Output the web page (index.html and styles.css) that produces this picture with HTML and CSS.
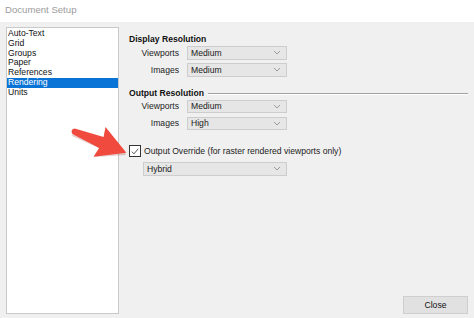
FILE: index.html
```html
<!DOCTYPE html>
<html>
<head>
<meta charset="utf-8">
<link rel="stylesheet" href="styles.css">
</head>
<body>
<div class="window">
  <div class="titlebar">Document Setup</div>
  <div class="content">
    <ul class="list">
      <li>Auto-Text</li>
      <li>Grid</li>
      <li>Groups</li>
      <li>Paper</li>
      <li>References</li>
      <li class="selected">Rendering</li>
      <li>Units</li>
    </ul>
    <div class="panel">
      <div class="heading">Display Resolution</div>
      <div class="rows">
        <span class="label">Viewports</span>
        <div class="select"><span>Medium</span><svg class="chev" viewBox="0 0 8 5" width="8" height="5"><path d="M1 1 L4 4 L7 1" fill="none" stroke="#9a9a9a" stroke-width="1"/></svg></div>
        <span class="label">Images</span>
        <div class="select"><span>Medium</span><svg class="chev" viewBox="0 0 8 5" width="8" height="5"><path d="M1 1 L4 4 L7 1" fill="none" stroke="#9a9a9a" stroke-width="1"/></svg></div>
      </div>
      <div class="heading ruled"><span>Output Resolution</span><i class="rule"></i></div>
      <div class="rows">
        <span class="label">Viewports</span>
        <div class="select"><span>Medium</span><svg class="chev" viewBox="0 0 8 5" width="8" height="5"><path d="M1 1 L4 4 L7 1" fill="none" stroke="#9a9a9a" stroke-width="1"/></svg></div>
        <span class="label">Images</span>
        <div class="select"><span>High</span><svg class="chev" viewBox="0 0 8 5" width="8" height="5"><path d="M1 1 L4 4 L7 1" fill="none" stroke="#9a9a9a" stroke-width="1"/></svg></div>
      </div>
      <label class="check">
        <span class="box"><svg viewBox="0 0 12 12" width="11" height="11"><path d="M2.2 6.2 L4.8 8.8 L9.8 2.8" fill="none" stroke="#333" stroke-width="1"/></svg></span>
        <span>Output Override (for raster rendered viewports only)</span>
      </label>
      <div class="select wide"><span>Hybrid</span><svg class="chev" viewBox="0 0 8 5" width="8" height="5"><path d="M1 1 L4 4 L7 1" fill="none" stroke="#9a9a9a" stroke-width="1"/></svg></div>
      <div class="spacer"></div>
      <div class="footer"><button class="btn">Close</button></div>
    </div>
  </div>
  <svg class="arrow" width="80" height="50" viewBox="0 0 80 50">
    <g transform="translate(13,12) rotate(22)">
      <path d="M1 2 L31 -1 L29 -13 L58 1 L29 15 L31 5 L1 4 Q-2 3 1 2 Z" fill="#9b3b33" opacity="0.25" transform="translate(1,2)"/>
      <path d="M1 -2 L31 -5 L29 -15 L58 1 L29 17 L31 7 L1 4 Q-3 1 1 -2 Z" fill="#ef4a3d"/>
    </g>
  </svg>
</div>
</body>
</html>
```

FILE: styles.css
```css
* { box-sizing: border-box; }
html, body { margin: 0; padding: 0; }
body {
  width: 474px;
  height: 318px;
  overflow: hidden;
  background: #f0f0f0;
  font-family: "Liberation Sans", Arial, sans-serif;
  font-size: 8.6px;
  color: #1a1a1a;
}
.window {
  position: relative;
  width: 474px;
  height: 318px;
  display: flex;
  flex-direction: column;
}
.titlebar {
  height: 22px;
  background: #ffffff;
  color: #9b9b9b;
  font-size: 9.6px;
  line-height: 20px;
  padding-left: 5px;
  flex: none;
}
.content {
  flex: 1;
  display: flex;
  padding: 5px 6px 4px 6px;
}
.list {
  list-style: none;
  margin: 0;
  padding: 1px 0 0 0;
  width: 113px;
  background: #ffffff;
  border: 1px solid #c9c9c9;
  flex: none;
}
.list li {
  height: 9.8px;
  line-height: 9.8px;
  padding-left: 1px;
  color: #111;
}
.list li.selected {
  background: #0a74d6;
  color: #ffffff;
}
.panel {
  flex: 1;
  display: flex;
  flex-direction: column;
  padding-left: 10px;
  padding-top: 6px;
}
.heading {
  font-weight: bold;
  font-size: 8.6px;
  height: 12px;
  line-height: 12px;
  color: #111;
}
.heading.ruled {
  display: flex;
  align-items: center;
  gap: 4px;
  margin-top: 10px;
}
.rule {
  flex: 1;
  height: 2px;
  border-top: 1px solid #a0a0a0;
  border-bottom: 1px solid #ffffff;
  margin-top: 2px;
}
.rows {
  display: grid;
  grid-template-columns: 50px 100px;
  column-gap: 8px;
  row-gap: 3.5px;
  align-items: center;
  margin-top: 1px;
}
.label {
  text-align: right;
  color: #222;
}
.select {
  height: 13.5px;
  background: #e6e6e6;
  border: 1px solid #cdcdcd;
  display: flex;
  align-items: center;
  justify-content: space-between;
  padding: 0 5px 0 3px;
  color: #1a1a1a;
}
.select.wide {
  width: 144px;
  margin-left: 14px;
  margin-top: 5px;
}
.chev { flex: none; }
.check {
  display: flex;
  align-items: center;
  gap: 3px;
  margin-top: 15px;
  color: #222;
}
.box {
  width: 12px;
  height: 12px;
  border: 1px solid #333;
  background: #fff;
  display: flex;
  align-items: center;
  justify-content: center;
}
.spacer { flex: 1; }
.footer {
  display: flex;
  justify-content: flex-end;
}
.btn {
  width: 65px;
  height: 18px;
  background: #e1e1e1;
  border: 1px solid #cfcfcf;
  font-family: "Liberation Sans", Arial, sans-serif;
  font-size: 8.6px;
  color: #111;
  padding: 0;
  margin-right: 0;
  margin-bottom: 0;
}
.arrow {
  position: absolute;
  left: 60px;
  top: 118px;
}
```
